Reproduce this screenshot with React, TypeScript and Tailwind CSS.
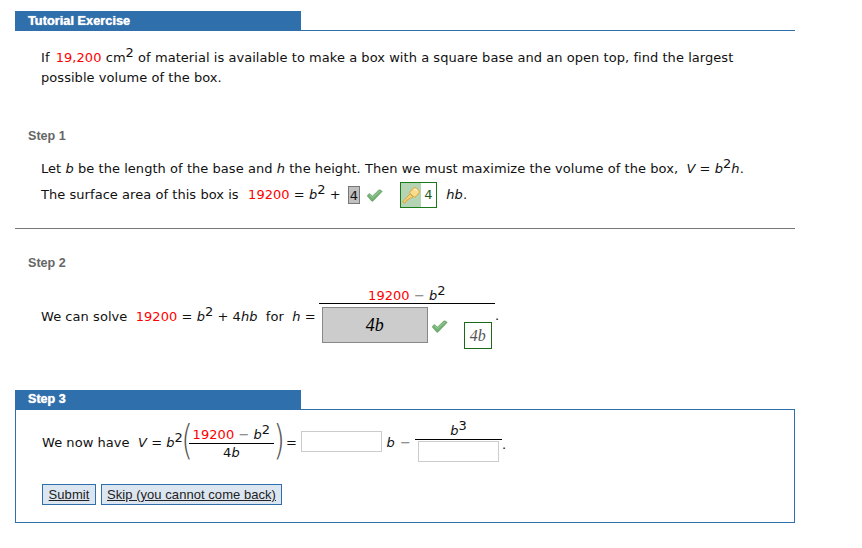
import React from 'react';

const Key = () => (
  <svg width="20" height="22" viewBox="0 0 20 22">
    <path d="M2 17.5 L9 10 L12 13 L10.5 14 L9.5 13.5 L8.5 15 L7 15 L6.5 16.5 L5 17 L4 19 L2.5 19 Z" fill="#f6d47a" stroke="#dca640" strokeWidth="1" strokeLinejoin="round" />
    <path d="M9 8 L12.5 4 Q13.5 3 15 4 L18 6.5 Q19 7.5 18 9 L15 12.5 Q13.5 13.5 12.5 12.5 L9 9.5 Q8.5 8.8 9 8 Z" fill="#f8dc8c" stroke="#dca640" strokeWidth="1" />
    <path d="M13 6 L15 5.5 L16 7" fill="none" stroke="#fff4c8" strokeWidth="1.2" />
  </svg>
);

const Check = () => (
  <svg width="17" height="13" viewBox="0 0 17 13">
    <path d="M1.2 7 Q1.5 5.5 3.5 4.5 L6.5 7 L13 0.8 Q15.5 1 16.2 2.5 L7 12.2 Q6.2 12.6 5.5 12 Z" fill="#74b074" stroke="#5f9f5f" strokeWidth="0.5" />
    <path d="M3.5 6 L6.5 8.5 L14 2" fill="none" stroke="#a8d4a8" strokeWidth="0.8" />
  </svg>
);

const I = ({ children }: { children: React.ReactNode }) => <i className="italic">{children}</i>;
const Sup = ({ children }: { children: React.ReactNode }) => (
  <sup className="text-[13px] leading-none align-baseline -top-[5px]">{children}</sup>
);
const Red = ({ children }: { children: React.ReactNode }) => <span className="text-[#ff0000]">{children}</span>;

const App: React.FC = () => {
  return (
    <div className="h-[548px] w-[862px] bg-white overflow-hidden text-[13px] text-[#111] font-['DejaVu_Sans',Verdana,sans-serif] tracking-[0.05px]">
      <div className="ml-[15px] w-[780px] pt-[11px]">
        {/* tutorial header */}
        <div className="border-b border-[#2f6fab] h-[20px]">
          <div className="w-[286px] h-[20px] bg-[#2f6fab] pl-[13px] text-white font-bold text-[12.8px] tracking-normal leading-[19px] font-['Liberation_Sans',Arial,sans-serif] [text-shadow:0_0_1px_#fff]">
            Tutorial Exercise
          </div>
        </div>
        <div className="pl-[26px] pt-[17px] leading-[20px] w-[740px]">
          If <span className="ml-[2px] text-[#ff0000]">19,200</span> cm<Sup>2</Sup> of material is available to make a box with a square base and an open top, find the largest possible volume of the box.
        </div>

        {/* step 1 */}
        <div className="pl-[13px] mt-[40px] font-bold text-[12.6px] tracking-normal text-[#666] leading-[16px] font-['Liberation_Sans',Arial,sans-serif]">Step 1</div>
        <div className="pl-[26px] mt-[15px] leading-[20px]">
          Let <I>b</I> be the length of the base and <I>h</I> the height. Then we must maximize the volume of the box,&nbsp; <I>V</I> = <I>b</I><Sup>2</Sup><I>h</I>.
        </div>
        <div className="pl-[26px] mt-[2px] h-[28px] flex items-center whitespace-pre">
          <span>The surface area of this box is  </span>
          <span className="ml-[1px] text-[#ff0000]">19200</span>
          <span> = <I>b</I><Sup>2</Sup> + </span>
          <span className="ml-[3px] w-[12px] h-[18px] bg-[#c0c0c0] border border-[#777] flex items-center justify-center leading-none">4</span>
          <span className="ml-[6px] flex"><Check /></span>
          <span className="ml-[17px] h-[26px] w-[37px] border border-[#1a7a1a] flex items-stretch">
            <span className="w-[20px] bg-[#b4d4b4] flex items-center justify-center"><Key /></span>
            <span className="flex-1 flex items-center justify-center text-[#1a5c1a]">4</span>
          </span>
          <span className="ml-[1px]">  <I>hb</I>.</span>
        </div>
        <div className="mt-[19px] border-t border-[#777]" />

        {/* step 2 */}
        <div className="pl-[13px] mt-[26px] font-bold text-[12.6px] tracking-normal text-[#666] leading-[16px] font-['Liberation_Sans',Arial,sans-serif]">Step 2</div>
        <div className="pl-[26px] mt-[14px] flex items-start whitespace-pre">
          <span className="mt-[22px] leading-[20px]">We can solve  <Red>19200</Red> = <I>b</I><Sup>2</Sup> + 4<I>hb</I>  for  <I>h</I> = </span>
          <span className="flex flex-col w-[176px] -ml-[1px]">
            <span className="text-center border-b border-black leading-[22px] h-[19px]"><Red>19200</Red> <span className="text-[#777]">−</span> <I>b</I><Sup>2</Sup></span>
            <span className="flex items-start">
              <span className="ml-[3px] mt-[3px] w-[106px] h-[36px] bg-[#cccccc] border border-[#888] flex items-center justify-center font-['Liberation_Serif',serif] italic text-[18px] text-black">4b</span>
              <span className="ml-[3px] mt-[16px] flex"><Check /></span>
              <span className="ml-[16px] mt-[18px] w-[28px] h-[27px] border border-[#1a6a1a] flex items-center justify-center font-['Liberation_Serif',serif] italic text-[16px] text-[#555]">4b</span>
            </span>
          </span>
          <span className="mt-[21px] leading-[20px]">.</span>
        </div>

        {/* step 3 */}
        <div className="mt-[41px] w-[286px] h-[19px] bg-[#2f6fab] pl-[13px] text-white font-bold text-[12.6px] tracking-normal leading-[19px] font-['Liberation_Sans',Arial,sans-serif] [text-shadow:0_0_1px_#fff]">
          Step 3
        </div>
        <div className="border border-[#2f6fab] h-[114px]">
          <div className="pl-[26px] mt-[12px] h-[41px] flex items-center whitespace-pre">
            <span>We now have  <I>V</I> = <I>b</I><Sup>2</Sup></span>
            <span className="-ml-[3px] w-[9px] text-[40px] font-thin text-[#555] leading-none -mt-[6px] scale-x-75">(</span>
            <span className="mt-[1px] inline-flex flex-col items-center w-[85px]">
              <span className="w-full text-center border-b border-black leading-[17px] h-[18px] whitespace-nowrap"><Red>19200</Red> <span className="text-[#777]">−</span> <I>b</I><Sup>2</Sup></span>
              <span className="leading-[17px]">4<I>b</I></span>
            </span>
            <span className="-ml-[2px] w-[10px] text-[40px] font-thin text-[#555] leading-none -mt-[6px] scale-x-75">)</span>
            <span> = </span>
            <span className="-mt-[2px] w-[81px] h-[21px] border border-[#ccc] bg-white" />
            <span> <I>b</I> <span className="ml-[1px] text-[#777]">−</span> </span>
            <span className="flex flex-col w-[87px] items-center">
              <span className="w-full text-center border-b border-black leading-[16px] h-[17px]"><I>b</I><Sup>3</Sup></span>
              <span className="mt-[1px] w-[81px] h-[21px] border border-[#ccc]" />
            </span>
            <span className="mt-[4px]">.</span>
          </div>
          <div className="pl-[26px] mt-[21px] flex gap-[5px] font-['Liberation_Sans',Arial,sans-serif] text-[13px] text-[#222]">
            <button className="h-[21px] w-[54px] border border-[#2f6fab] bg-[#dce6f1] underline leading-[18px]">Submit</button>
            <button className="h-[21px] w-[181px] border border-[#2f6fab] bg-[#dce6f1] underline leading-[18px] whitespace-nowrap">Skip (you cannot come back)</button>
          </div>
        </div>
      </div>
    </div>
  );
};

export default App;
